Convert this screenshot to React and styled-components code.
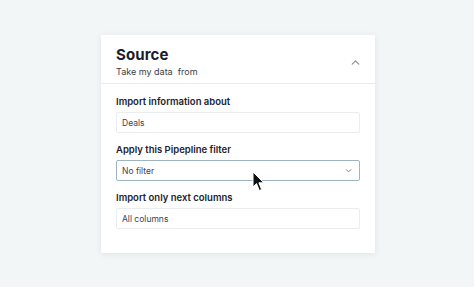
import React from "react";
import styled, { createGlobalStyle } from "styled-components";

const Global = createGlobalStyle`
  html, body { margin: 0; padding: 0; background: #f3f6f7; }
  body { font-family: Inter, "Noto Sans", sans-serif; width: 474px; height: 287px; overflow: hidden; }
`;

const Page = styled.div`
  padding: 35px 0 0 101px;
  position: relative;
`;

const Card = styled.div`
  width: 274px;
  background: #ffffff;
  box-shadow: 0 1px 6px rgba(40, 70, 90, 0.10);
  position: relative;
`;

const Header = styled.div`
  display: flex;
  align-items: center;
  justify-content: space-between;
  padding: 6px 14px 0 15px;
  height: 42px;
  border-bottom: 1px solid #e8ecee;
`;

const Titles = styled.div`
  display: flex;
  flex-direction: column;
`;

const Title = styled.div`
  font-size: 15px;
  font-weight: 700;
  color: #1c1d2b;
  line-height: 18px;
  letter-spacing: 0.1px;
`;

const Subtitle = styled.div`
  font-size: 9px;
  color: #3a3d48;
  line-height: 12px;
  margin-top: 2px;
`;

const Body = styled.div`
  display: flex;
  flex-direction: column;
  gap: 11px;
  padding: 12px 15px 24px 15px;
`;

const Field = styled.div`
  display: flex;
  flex-direction: column;
  gap: 4px;
`;

const Label = styled.div`
  font-size: 9.5px;
  font-weight: 600;
  color: #22232e;
  line-height: 12px;
`;

const Input = styled.div`
  height: 21px;
  box-sizing: border-box;
  border: 1px solid ${(p) => (p.$active ? "#9db4c2" : "#e9edef")};
  border-radius: 2px;
  display: flex;
  align-items: center;
  justify-content: space-between;
  padding: 0 6px 0 5px;
  font-size: 8.5px;
  color: #3f424c;
  background: #fff;
`;

const Cursor = styled.svg`
  position: absolute;
  left: 252px;
  top: 171px;
`;

const Chevron = ({ up, size = 10, color = "#8a8f98" }) => (
  <svg width={size} height={size} viewBox="0 0 10 10">
    <path
      d={up ? "M2 6.5 L5 3.5 L8 6.5" : "M2.5 4 L5 6.5 L7.5 4"}
      fill="none"
      stroke={color}
      strokeWidth="1.1"
      strokeLinecap="round"
      strokeLinejoin="round"
    />
  </svg>
);

export default function App() {
  return (
    <>
      <Global />
      <Page>
        <Card>
          <Header>
            <Titles>
              <Title>Source</Title>
              <Subtitle>Take my data&nbsp; from</Subtitle>
            </Titles>
            <Chevron up size={11} />
          </Header>
          <Body>
            <Field>
              <Label>Import information about</Label>
              <Input>Deals</Input>
            </Field>
            <Field>
              <Label>Apply this Pipepline filter</Label>
              <Input $active>
                No filter
                <Chevron size={9} color="#7a7f88" />
              </Input>
            </Field>
            <Field>
              <Label>Import only next columns</Label>
              <Input>All columns</Input>
            </Field>
          </Body>
        </Card>
        <Cursor width="14" height="22" viewBox="0 0 14 22">
          <path
            d="M1 1 L1 16 L4.5 12.6 L7.3 19.5 L9.6 18.5 L6.9 11.8 L11.8 11.8 Z"
            fill="#111"
            stroke="#fff"
            strokeWidth="1"
            strokeLinejoin="round"
          />
        </Cursor>
      </Page>
    </>
  );
}
